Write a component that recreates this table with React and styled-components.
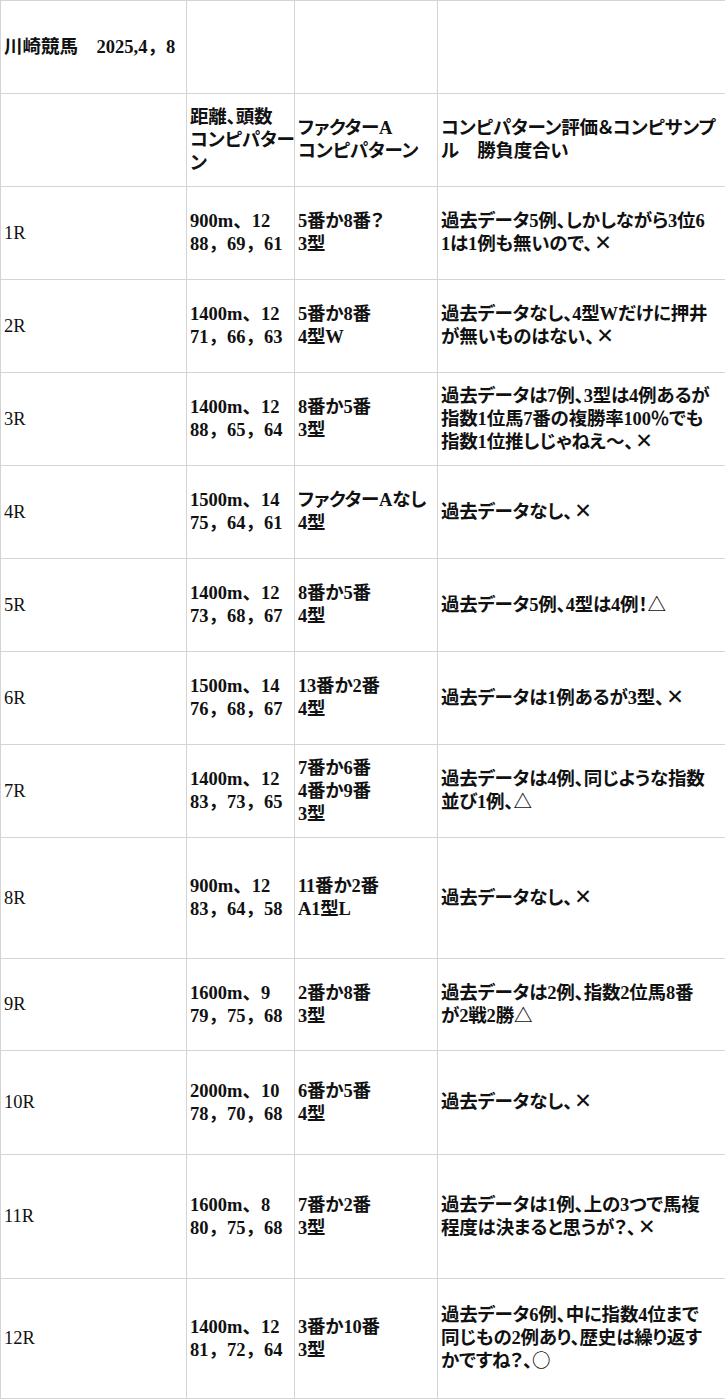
import React from 'react';
import styled, { createGlobalStyle } from 'styled-components';

const GlobalStyle = createGlobalStyle`
    html, body {
        margin: 0;
        padding: 0;
        background: #fff;
    }
`;

const Table = styled.table`
    width: 725px;
    table-layout: fixed;
    border-collapse: collapse;
    font-family: "Liberation Serif", "Noto Sans CJK JP", serif;
    font-size: 18.5px;
    line-height: 23px;
    color: #111;
`;

const Row = styled.tr`
    height: ${(p) => p.$h}px;
`;

const Cell = styled.td`
    border: 1px solid #d4d4d4;
    padding: 0 0 0 3px;
    vertical-align: middle;
    text-align: left;
    font-weight: ${(p) => (p.$bold ? 700 : 400)};
    font-feature-settings: ${(p) => (p.$tight ? '"palt"' : 'normal')};
    letter-spacing: ${(p) => (p.$tight ? '-0.2px' : 'normal')};
    white-space: nowrap;
    overflow: hidden;
`;

const Line = styled.div`
    display: block;
`;

// ✕ ○ △ are drawn from a sans face, as in the sheet
const Mark = styled.span`
    font-family: ${(p) => (p.$cross ? '"DejaVu Sans", sans-serif' : '"Noto Sans CJK JP", sans-serif')};
    font-weight: 700;
    font-size: ${(p) => (p.$cross ? '21px' : '18.5px')};
    line-height: 1;
    font-feature-settings: normal;
    margin-left: ${(p) => (p.$cross ? '2px' : '0')};
`;

const races = [
    {
        r: '1R', h: 93,
        dist: ['900m、12', '88，69，61'],
        factor: ['5番か8番？', '3型'],
        note: ['過去データ5例、しかしながら3位6', '1は1例も無いので、✕'],
    },
    {
        r: '2R', h: 93,
        dist: ['1400m、12', '71，66，63'],
        factor: ['5番か8番', '4型W'],
        note: ['過去データなし、4型Wだけに押井', 'が無いものはない、✕'],
    },
    {
        r: '3R', h: 93,
        dist: ['1400m、12', '88，65，64'],
        factor: ['8番か5番', '3型'],
        note: ['過去データは7例、3型は4例あるが', '指数1位馬7番の複勝率100％でも', '指数1位推しじゃねえ～、✕'],
    },
    {
        r: '4R', h: 93,
        dist: ['1500m、14', '75，64，61'],
        factor: ['ファクターAなし', '4型'],
        note: ['過去データなし、✕'],
    },
    {
        r: '5R', h: 93,
        dist: ['1400m、12', '73，68，67'],
        factor: ['8番か5番', '4型'],
        note: ['過去データ5例、4型は4例！△'],
    },
    {
        r: '6R', h: 93,
        dist: ['1500m、14', '76，68，67'],
        factor: ['13番か2番', '4型'],
        note: ['過去データは1例あるが3型、✕'],
    },
    {
        r: '7R', h: 93,
        dist: ['1400m、12', '83，73，65'],
        factor: ['7番か6番', '4番か9番', '3型'],
        note: ['過去データは4例、同じような指数', '並び1例、△'],
    },
    {
        r: '8R', h: 121,
        dist: ['900m、12', '83，64，58'],
        factor: ['11番か2番', 'A1型L'],
        note: ['過去データなし、✕'],
    },
    {
        r: '9R', h: 92,
        dist: ['1600m、9', '79，75，68'],
        factor: ['2番か8番', '3型'],
        note: ['過去データは2例、指数2位馬8番', 'が2戦2勝△'],
    },
    {
        r: '10R', h: 104,
        dist: ['2000m、10', '78，70，68'],
        factor: ['6番か5番', '4型'],
        note: ['過去データなし、✕'],
    },
    {
        r: '11R', h: 124,
        dist: ['1600m、8', '80，75，68'],
        factor: ['7番か2番', '3型'],
        note: ['過去データは1例、上の3つで馬複', '程度は決まると思うが？、✕'],
    },
    {
        r: '12R', h: 120,
        dist: ['1400m、12', '81，72，64'],
        factor: ['3番か10番', '3型'],
        note: ['過去データ6例、中に指数4位まで', '同じもの2例あり、歴史は繰り返す', 'かですね？、○'],
    },
];

function Lines({ items }) {
    return items.map((t, i) => (
        <Line key={i}>
            {t.split(/([✕○△])/).map((part, j) =>
                /^[✕○△]$/.test(part) ? <Mark key={j} $cross={part === '✕'}>{part}</Mark> : part
            )}
        </Line>
    ));
}

function App() {
    return (
        <>
            <GlobalStyle />
            <Table>
                <colgroup>
                    <col style={{ width: 186 }} />
                    <col style={{ width: 108 }} />
                    <col style={{ width: 143 }} />
                    <col style={{ width: 288 }} />
                </colgroup>
                <tbody>
                    <Row $h={93}>
                        <Cell $bold>川崎競馬　2025,4，8</Cell>
                        <Cell />
                        <Cell />
                        <Cell />
                    </Row>
                    <Row $h={93}>
                        <Cell />
                        <Cell $bold $tight><Lines items={['距離、頭数', 'コンピパター', 'ン']} /></Cell>
                        <Cell $bold $tight><Lines items={['ファクターA', 'コンピパターン']} /></Cell>
                        <Cell $bold $tight><Lines items={['コンピパターン評価＆コンピサンプ', 'ル　勝負度合い']} /></Cell>
                    </Row>
                    {races.map((race) => (
                        <Row key={race.r} $h={race.h}>
                            <Cell>{race.r}</Cell>
                            <Cell $bold><Lines items={race.dist} /></Cell>
                            <Cell $bold $tight><Lines items={race.factor} /></Cell>
                            <Cell $bold $tight><Lines items={race.note} /></Cell>
                        </Row>
                    ))}
                </tbody>
            </Table>
        </>
    );
}

export default App;
